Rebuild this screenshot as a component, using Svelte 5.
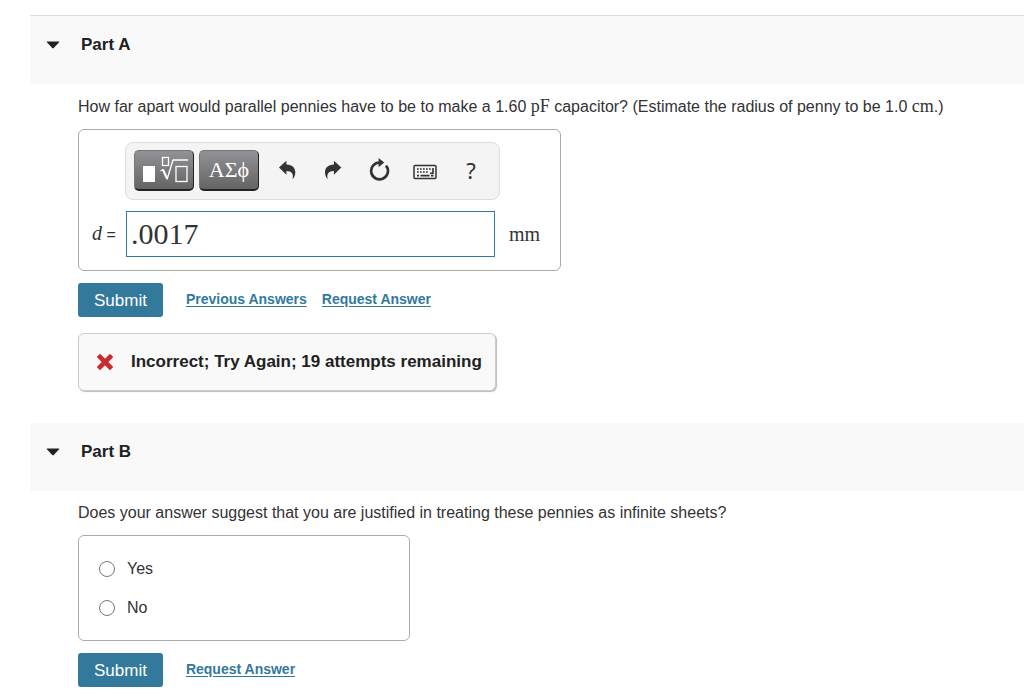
<script lang="ts">
	// Two-part homework problem: a numeric answer with the equation toolbar,
	// then a yes/no question. Each part folds from its header.

	let answer = $state('.0017');
	let choice = $state('');
	let openA = $state(true);
	let openB = $state(true);
</script>

<svelte:head><title>Parallel pennies</title></svelte:head>

{#snippet caret(open: boolean)}
	<svg class="caret" class:closed={!open} width="14" height="8" viewBox="0 0 14 8" aria-hidden="true">
		<path d="M1.2 0.5h11.6q1 0 .3.8L8 6.7q-1 1-2 0L.9 1.3q-.7-.8.3-.8z" fill="#222" />
	</svg>
{/snippet}

<main>
	<section class="part">
		<h2 class="first">
			<button class="toggle" aria-expanded={openA} onclick={() => (openA = !openA)}>
				{@render caret(openA)} Part A
			</button>
		</h2>
		{#if openA}
			<div class="body">
				<p class="prompt">
					How far apart would parallel pennies have to be to make a 1.60 <span class="unit">pF</span>
					capacitor? (Estimate the radius of penny to be 1.0 <span class="unit">cm</span>.)
				</p>

				<div class="answer-box">
					<div class="toolbar" role="toolbar" aria-label="Equation tools">
						<button class="dark" aria-label="Templates">
							<svg width="48" height="28" viewBox="0 0 48 28" fill="none" stroke="#fff">
								<rect x="3" y="10" width="12" height="16" fill="#fff" stroke="none" />
								<rect x="22.5" y="1.5" width="6" height="8" stroke-width="1.3" />
								<path d="M20.5 15l2.5-1.5" stroke-width="1.2" />
								<path d="M23 13.5l4 9" stroke-width="2.2" />
								<path d="M27 23.5L33 4H48" stroke-width="1.3" />
								<rect x="36" y="10.5" width="11" height="15" stroke-width="1.3" />
							</svg>
						</button>
						<button class="dark greek" aria-label="Greek symbols">ΑΣϕ</button>
						<button class="tool" aria-label="Undo">
							<svg width="20" height="20" viewBox="0 0 20 20" fill="#333">
								<path d="M2 7.6L9.4.8v3.7c5.6.2 8.9 3.2 8.9 7.8 0 2.8-.9 5-2.7 6.9 1.2-5.2-.7-8-6.2-8.1v3.7z" />
							</svg>
						</button>
						<button class="tool" aria-label="Redo">
							<svg width="20" height="20" viewBox="0 0 20 20" fill="#333">
								<path d="M18.3 7.6L10.9.8v3.7C5.3 4.7 2 7.7 2 12.3c0 2.8.9 5 2.7 6.9-1.2-5.2.7-8 6.2-8.1v3.7z" />
							</svg>
						</button>
						<button class="tool" aria-label="Reset">
							<svg width="22" height="24" viewBox="0 0 22 24">
								<path d="M12 4.6a8.4 8.4 0 1 0 6 3" fill="none" stroke="#333" stroke-width="2.7" />
								<path d="M10.6 0l5.6 4.6-5.6 4.6z" fill="#333" />
							</svg>
						</button>
						<button class="tool keys" aria-label="Keyboard shortcuts">
							<svg width="24" height="20" viewBox="0 0 24 20" fill="none" stroke="#333">
								<rect x="1" y="4.5" width="22" height="13" rx="1" stroke-width="1.5" />
								<path d="M4 8h14M4 11h12" stroke-width="1.7" stroke-dasharray="1.7 1.3" />
								<path d="M20 7v5.2h-3" stroke-width="1.6" />
								<path d="M4 14.6h2M7.5 14.6h9M18 14.6h2.5" stroke-width="1.8" />
							</svg>
						</button>
						<button class="tool help" aria-label="Help">?</button>
					</div>

					<div class="entry">
						<label for="distance"><i>d</i> =</label>
						<input id="distance" type="text" autocomplete="off" bind:value={answer} />
						<span class="unit">mm</span>
					</div>
				</div>

				<div class="actions">
					<button class="submit">Submit</button>
					<a href="#previous">Previous Answers</a>
					<a href="#request-a">Request Answer</a>
				</div>

				<div class="feedback" role="status">
					<svg width="18" height="18" viewBox="0 0 18 18" aria-hidden="true">
						<path
							d="M4 4l10 10M14 4L4 14"
							stroke="#cd2a2e"
							stroke-width="4.6"
							stroke-linecap="square"
						/>
					</svg>
					Incorrect; Try Again; 19 attempts remaining
				</div>
			</div>
		{/if}
	</section>

	<section class="part">
		<h2>
			<button class="toggle" aria-expanded={openB} onclick={() => (openB = !openB)}>
				{@render caret(openB)} Part B
			</button>
		</h2>
		{#if openB}
			<div class="body">
				<p class="prompt">
					Does your answer suggest that you are justified in treating these pennies as infinite sheets?
				</p>

				<div class="choices" role="radiogroup" aria-label="Answer">
					{#each ['Yes', 'No'] as option}
						<label>
							<input type="radio" name="justified" value={option} bind:group={choice} />
							{option}
						</label>
					{/each}
				</div>

				<div class="actions">
					<button class="submit">Submit</button>
					<a href="#request-b">Request Answer</a>
				</div>
			</div>
		{/if}
	</section>
</main>

<style>
	:global(body) { background: #fff; }
	main {
		padding: 15px 0 0 30px;
		color: #333;
		font: 16px/20px "Liberation Sans", Arial, sans-serif;
	}
	.part { margin-bottom: 32px; }
	h2 {
		margin: 0;
		padding: 19px 16px 29px;
		background: #f9f9f9;
		font-size: 17px;
	}
	h2.first { border-top: 1px solid #ddd; }
	button { cursor: pointer; font-family: inherit; }
	.toggle {
		display: flex;
		align-items: center;
		gap: 21px;
		padding: 0;
		border: 0;
		background: none;
		color: #222;
		font-size: 17px;
		font-weight: bold;
		line-height: 20px;
	}
	.closed { transform: rotate(-90deg); }

	.body { padding: 12px 48px 0; }
	.prompt { margin: 0 0 12px; line-height: 20px; }
	.unit { font-family: "Liberation Serif", serif; font-size: 18px; line-height: 20px; }

	.answer-box {
		box-sizing: border-box;
		width: fit-content;
		max-width: 100%;
		padding: 12px 20px 13px 12px;
		border: 1px solid #aaa;
		border-radius: 6px;
	}
	.toolbar {
		display: flex;
		align-items: center;
		width: fit-content;
		margin: 0 0 11px 34px;
		padding: 7px 5px 8px 8px;
		border: 1px solid #ddd;
		border-radius: 8px;
		background: #f4f4f4;
	}
	.dark {
		display: flex;
		align-items: center;
		justify-content: center;
		box-sizing: border-box;
		width: 60px;
		height: 41px;
		margin-right: 5px;
		padding: 0;
		border: 1px solid #777;
		border-right-color: #222;
		border-bottom: 2px solid #222;
		border-radius: 5px;
		background: linear-gradient(#929196, #646464);
		color: #fff;
	}
	.greek { font: 22px/24px "Liberation Serif", serif; }
	.tool {
		display: flex;
		align-items: center;
		justify-content: center;
		width: 46px;
		height: 40px;
		padding: 0 0 2px;
		border: 0;
		background: none;
		color: #333;
	}
	.keys { padding: 0; }
	.help { font: 22px/24px "Noto Sans", sans-serif; }

	.entry { display: flex; align-items: center; }
	.entry label { padding-left: 1px; width: 34px; white-space: nowrap; }
	.entry i { font: italic 20px/20px "Liberation Serif", serif; }
	.entry .unit { font-size: 20px; }
	.entry input {
		box-sizing: border-box;
		width: 369px;
		min-width: 0;
		height: 46px;
		margin-right: 14px;
		padding: 0 4px;
		border: 1px solid #33799b;
		border-radius: 0;
		color: #333;
		font: 30px/40px "Liberation Serif", serif;
	}

	.actions { display: flex; align-items: center; gap: 15px; margin-top: 12px; }
	.submit {
		height: 34px;
		margin-right: 8px;
		padding: 1px 16px 0;
		border: 0;
		border-radius: 3px;
		background: #33799b;
		color: #fff;
		font-size: 17px;
	}
	.actions a {
		padding-bottom: 3px;
		color: #33799b;
		font-size: 14px;
		font-weight: bold;
		text-underline-offset: 2px;
	}

	.feedback {
		display: flex;
		align-items: center;
		gap: 17px;
		box-sizing: border-box;
		width: fit-content;
		min-height: 58px;
		margin-top: 16px;
		padding: 0 13px 0 17px;
		border: 1px solid #ccc;
		border-radius: 6px;
		background: #f9f9f9;
		box-shadow: 1px 1px 1px #bbb;
		color: #222;
		font-size: 17px;
		font-weight: bold;
	}

	.choices {
		display: grid;
		gap: 19px;
		box-sizing: border-box;
		max-width: 332px;
		padding: 23px 20px 22px;
		border: 1px solid #aaa;
		border-radius: 6px;
	}
	.choices label { display: flex; align-items: center; gap: 12px; }
	.choices input {
		appearance: none;
		box-sizing: border-box;
		width: 16px;
		height: 16px;
		margin: 0;
		border: 1px solid #777;
		border-radius: 50%;
		background: #fff;
	}
	.choices input:checked { border: 5px solid #33799b; }
</style>
